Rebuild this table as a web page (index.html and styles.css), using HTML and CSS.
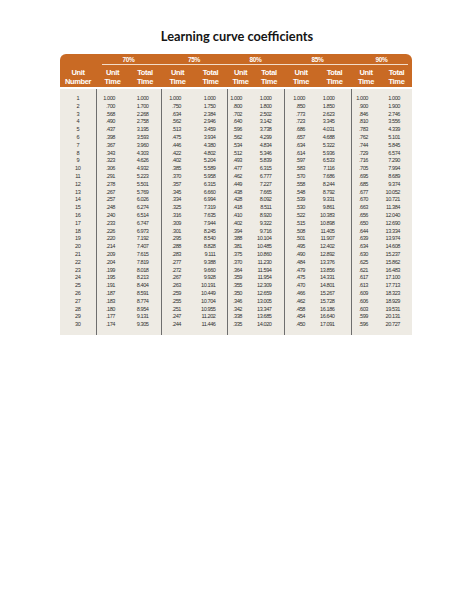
FILE: index.html
```html
<!DOCTYPE html>
<html>
<head>
<meta charset="utf-8">
<link rel="stylesheet" href="styles.css">
</head>
<body>
<h1 class="title">Learning curve coefficients</h1>
<div class="sheet">
  <div class="head">
    <div class="pct-row">
      <div class="pct pct-first">70%</div>
      <div class="pct">75%</div>
      <div class="pct">80%</div>
      <div class="pct">85%</div>
      <div class="pct pct-last">90%</div>
    </div>
    <div class="sub-row">
      <div class="sub">Unit<br>Number</div>
      <div class="sub">Unit<br>Time</div>
      <div class="sub">Total<br>Time</div>
      <div class="sub">Unit<br>Time</div>
      <div class="sub">Total<br>Time</div>
      <div class="sub">Unit<br>Time</div>
      <div class="sub">Total<br>Time</div>
      <div class="sub">Unit<br>Time</div>
      <div class="sub">Total<br>Time</div>
      <div class="sub">Unit<br>Time</div>
      <div class="sub">Total<br>Time</div>
    </div>
  </div>
  <table class="data">
    <colgroup>
      <col class="c-num"><col class="c70u"><col class="c70t"><col class="c75u"><col class="c75t"><col class="c80u"><col class="c80t"><col class="c85u"><col class="c85t"><col class="c90u"><col class="c90t">
    </colgroup>
    <tbody>
<tr><td>1</td><td>1.000</td><td>1.000</td><td>1.000</td><td>1.000</td><td>1.000</td><td>1.000</td><td>1.000</td><td>1.000</td><td>1.000</td><td>1.000</td></tr>
<tr><td>2</td><td>.700</td><td>1.700</td><td>.750</td><td>1.750</td><td>.800</td><td>1.800</td><td>.850</td><td>1.850</td><td>.900</td><td>1.900</td></tr>
<tr><td>3</td><td>.568</td><td>2.268</td><td>.634</td><td>2.384</td><td>.702</td><td>2.502</td><td>.773</td><td>2.623</td><td>.846</td><td>2.746</td></tr>
<tr><td>4</td><td>.490</td><td>2.758</td><td>.562</td><td>2.946</td><td>.640</td><td>3.142</td><td>.723</td><td>3.345</td><td>.810</td><td>3.556</td></tr>
<tr><td>5</td><td>.437</td><td>3.195</td><td>.513</td><td>3.459</td><td>.596</td><td>3.738</td><td>.686</td><td>4.031</td><td>.783</td><td>4.339</td></tr>
<tr><td>6</td><td>.398</td><td>3.593</td><td>.475</td><td>3.934</td><td>.562</td><td>4.299</td><td>.657</td><td>4.688</td><td>.762</td><td>5.101</td></tr>
<tr><td>7</td><td>.367</td><td>3.960</td><td>.446</td><td>4.380</td><td>.534</td><td>4.834</td><td>.634</td><td>5.322</td><td>.744</td><td>5.845</td></tr>
<tr><td>8</td><td>.343</td><td>4.303</td><td>.422</td><td>4.802</td><td>.512</td><td>5.346</td><td>.614</td><td>5.936</td><td>.729</td><td>6.574</td></tr>
<tr><td>9</td><td>.323</td><td>4.626</td><td>.402</td><td>5.204</td><td>.493</td><td>5.839</td><td>.597</td><td>6.533</td><td>.716</td><td>7.290</td></tr>
<tr><td>10</td><td>.306</td><td>4.932</td><td>.385</td><td>5.589</td><td>.477</td><td>6.315</td><td>.583</td><td>7.116</td><td>.705</td><td>7.994</td></tr>
<tr><td>11</td><td>.291</td><td>5.223</td><td>.370</td><td>5.958</td><td>.462</td><td>6.777</td><td>.570</td><td>7.686</td><td>.695</td><td>8.689</td></tr>
<tr><td>12</td><td>.278</td><td>5.501</td><td>.357</td><td>6.315</td><td>.449</td><td>7.227</td><td>.558</td><td>8.244</td><td>.685</td><td>9.374</td></tr>
<tr><td>13</td><td>.267</td><td>5.769</td><td>.345</td><td>6.660</td><td>.438</td><td>7.665</td><td>.548</td><td>8.792</td><td>.677</td><td>10.052</td></tr>
<tr><td>14</td><td>.257</td><td>6.026</td><td>.334</td><td>6.994</td><td>.428</td><td>8.092</td><td>.539</td><td>9.331</td><td>.670</td><td>10.721</td></tr>
<tr><td>15</td><td>.248</td><td>6.274</td><td>.325</td><td>7.319</td><td>.418</td><td>8.511</td><td>.530</td><td>9.861</td><td>.663</td><td>11.384</td></tr>
<tr><td>16</td><td>.240</td><td>6.514</td><td>.316</td><td>7.635</td><td>.410</td><td>8.920</td><td>.522</td><td>10.383</td><td>.656</td><td>12.040</td></tr>
<tr><td>17</td><td>.233</td><td>6.747</td><td>.309</td><td>7.944</td><td>.402</td><td>9.322</td><td>.515</td><td>10.898</td><td>.650</td><td>12.690</td></tr>
<tr><td>18</td><td>.226</td><td>6.973</td><td>.301</td><td>8.245</td><td>.394</td><td>9.716</td><td>.508</td><td>11.405</td><td>.644</td><td>13.334</td></tr>
<tr><td>19</td><td>.220</td><td>7.192</td><td>.295</td><td>8.540</td><td>.388</td><td>10.104</td><td>.501</td><td>11.907</td><td>.639</td><td>13.974</td></tr>
<tr><td>20</td><td>.214</td><td>7.407</td><td>.288</td><td>8.828</td><td>.381</td><td>10.485</td><td>.495</td><td>12.402</td><td>.634</td><td>14.608</td></tr>
<tr><td>21</td><td>.209</td><td>7.615</td><td>.283</td><td>9.111</td><td>.375</td><td>10.860</td><td>.490</td><td>12.892</td><td>.630</td><td>15.237</td></tr>
<tr><td>22</td><td>.204</td><td>7.819</td><td>.277</td><td>9.388</td><td>.370</td><td>11.230</td><td>.484</td><td>13.376</td><td>.625</td><td>15.862</td></tr>
<tr><td>23</td><td>.199</td><td>8.018</td><td>.272</td><td>9.660</td><td>.364</td><td>11.594</td><td>.479</td><td>13.856</td><td>.621</td><td>16.483</td></tr>
<tr><td>24</td><td>.195</td><td>8.213</td><td>.267</td><td>9.928</td><td>.359</td><td>11.954</td><td>.475</td><td>14.331</td><td>.617</td><td>17.100</td></tr>
<tr><td>25</td><td>.191</td><td>8.404</td><td>.263</td><td>10.191</td><td>.355</td><td>12.309</td><td>.470</td><td>14.801</td><td>.613</td><td>17.713</td></tr>
<tr><td>26</td><td>.187</td><td>8.591</td><td>.259</td><td>10.449</td><td>.350</td><td>12.659</td><td>.466</td><td>15.267</td><td>.609</td><td>18.323</td></tr>
<tr><td>27</td><td>.183</td><td>8.774</td><td>.255</td><td>10.704</td><td>.346</td><td>13.005</td><td>.462</td><td>15.728</td><td>.606</td><td>18.929</td></tr>
<tr><td>28</td><td>.180</td><td>8.954</td><td>.251</td><td>10.955</td><td>.342</td><td>13.347</td><td>.458</td><td>16.186</td><td>.603</td><td>19.531</td></tr>
<tr><td>29</td><td>.177</td><td>9.131</td><td>.247</td><td>11.202</td><td>.338</td><td>13.685</td><td>.454</td><td>16.640</td><td>.599</td><td>20.131</td></tr>
<tr><td>30</td><td>.174</td><td>9.305</td><td>.244</td><td>11.446</td><td>.335</td><td>14.020</td><td>.450</td><td>17.091</td><td>.596</td><td>20.727</td></tr>
    </tbody>
  </table>
</div>
</body>
</html>
```

FILE: styles.css
```css
html, body {
  margin: 0;
  padding: 0;
  background: #ffffff;
}

.title {
  margin: 29px 0 0 0;
  height: 14px;
  line-height: 14px;
  text-align: center;
  font-family: Lato, "Open Sans", sans-serif;
  font-weight: 700;
  font-size: 12.8px;
  color: #151515;
}

.sheet {
  width: 352px;
  margin: 11px 0 0 60px;
}

.head {
  background: #c96a24;
  border-radius: 6px 6px 0 0;
  height: 33px;
  color: #ffffff;
  font-family: "Liberation Sans", Arial, sans-serif;
  font-weight: 700;
}

.pct-row {
  display: grid;
  grid-template-columns: 36px 65px 66px 57px 67px 61px;
  height: 11px;
}

.pct {
  height: 10px;
  line-height: 11px;
  font-size: 6.5px;
  letter-spacing: -0.3px;
  text-align: center;
  border-bottom: 1px solid #f3dcc8;
}

.pct-first {
  grid-column: 2;
  margin-left: 6px;
  padding-right: 6px;
}

.pct-last {
  margin-right: 4px;
  padding-left: 4px;
}

.sub-row {
  display: grid;
  grid-template-columns: 36px 33px 32px 33px 33px 27px 30px 34px 33px 30px 31px;
  padding-top: 3px;
}

.sub {
  font-size: 7.5px;
  line-height: 9px;
  letter-spacing: -0.35px;
  text-align: center;
}

.data {
  margin-top: 2px;
  width: 352px;
  table-layout: fixed;
  border-collapse: collapse;
  background: #eeebe4;
  font-family: "Liberation Sans", Arial, sans-serif;
  font-size: 5.6px;
  letter-spacing: -0.45px;
  color: #333333;
}

.c-num { width: 36px; }
.c70u { width: 33px; }
.c70t { width: 32px; }
.c75u { width: 33px; }
.c75t { width: 33px; }
.c80u { width: 27px; }
.c80t { width: 30px; }
.c85u { width: 34px; }
.c85t { width: 33px; }
.c90u { width: 30px; }
.c90t { width: 31px; }

.data td {
  padding: 0;
  height: 7.8px;
  line-height: 7.8px;
  text-align: right;
  white-space: nowrap;
}

.data tr:first-child td {
  padding-top: 6px;
}

.data tr:last-child td {
  padding-bottom: 6px;
}

.data td:nth-child(1) {
  text-align: center;
  padding-left: 0;
}

.data td:nth-child(2),
.data td:nth-child(4),
.data td:nth-child(6),
.data td:nth-child(8),
.data td:nth-child(10) {
  border-left: 1px solid #6e6e6e;
}

.data td:nth-child(2) { padding-right: 14px; }
.data td:nth-child(3) { padding-right: 12px; }
.data td:nth-child(4) { padding-right: 13px; }
.data td:nth-child(5) { padding-right: 11px; }
.data td:nth-child(6) { padding-right: 12px; }
.data td:nth-child(7) { padding-right: 12px; }
.data td:nth-child(8) { padding-right: 13px; }
.data td:nth-child(9) { padding-right: 16px; }
.data td:nth-child(10) { padding-right: 13px; }
.data td:nth-child(11) { padding-right: 12px; }
```
